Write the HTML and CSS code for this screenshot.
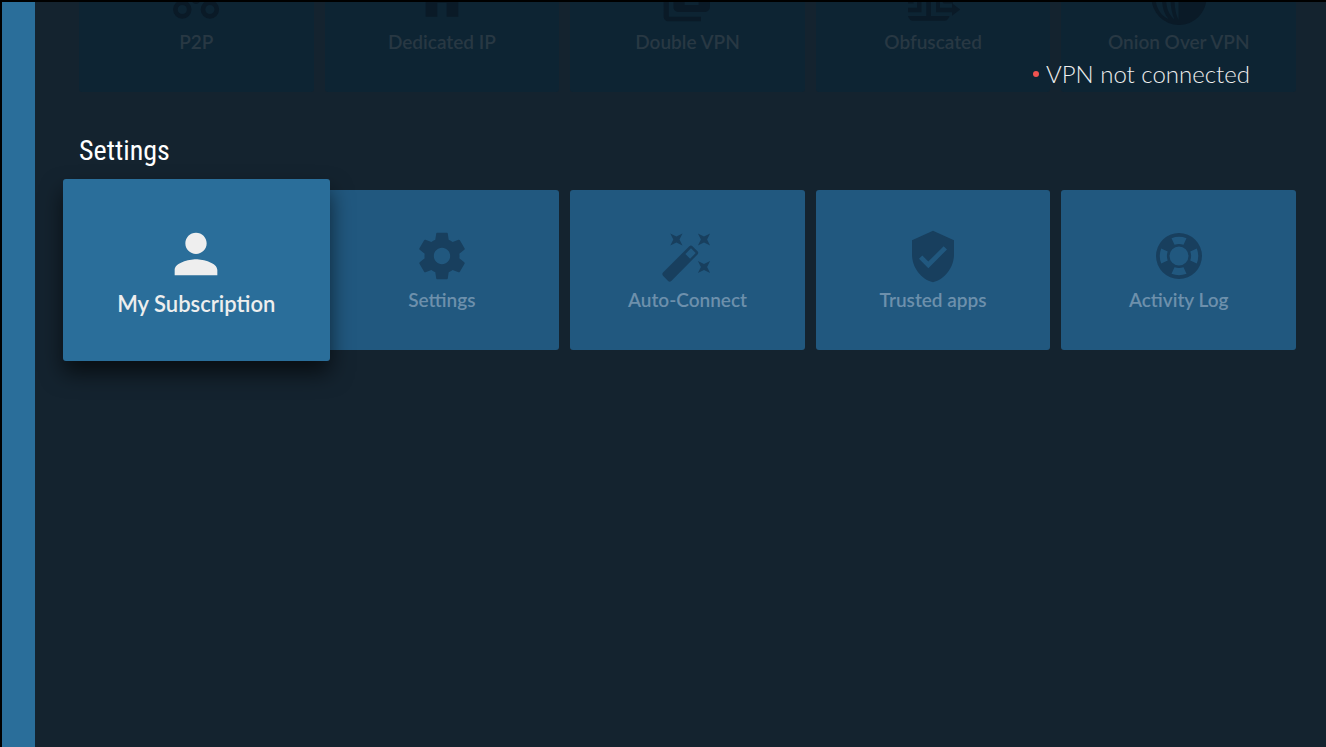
FILE: index.html
```html
<!DOCTYPE html>
<html lang="en">
<head>
<meta charset="utf-8">
<title>VPN Settings</title>
<link rel="stylesheet" href="styles.css">
</head>
<body>
<div class="app">
  <nav class="rail" aria-label="Menu"></nav>
  <main class="content">
    <section class="row row-dim" aria-label="Specialty servers">
      <button class="card" type="button">
        <svg class="icon" viewBox="0 0 56 56" fill="none" stroke="currentColor" stroke-width="4.6"><circle cx="14.3" cy="39.5" r="6.9"/><circle cx="41.9" cy="39.5" r="6.9"/><circle cx="28" cy="12" r="6.9"/><circle cx="28" cy="29.3" r="4.6" fill="currentColor" stroke="none"/></svg>
        <span class="label">P2P</span>
      </button>
      <button class="card" type="button">
        <svg class="icon" viewBox="0 0 24 24" fill="currentColor"><path d="M10 20v-6h4v6h5v-8h3L12 3 2 12h3v8z"/></svg>
        <span class="label">Dedicated IP</span>
      </button>
      <button class="card" type="button">
        <svg class="icon" viewBox="0 0 24 24" fill="currentColor" fill-rule="evenodd"><path d="M4.200 6H2v14c0 1.100.9 2 2 2h14v-2H4.200zM8.200 2h11.600c1.100 0 2 .9 2 2v12c0 1.100-.9 2-2 2H8.200c-1.100 0-2-.9-2-2V4c0-1.100.9-2 2-2zM11 9v6h6V9z"/></svg>
        <span class="label">Double VPN</span>
      </button>
      <button class="card" type="button">
        <svg class="icon" viewBox="0 0 56 56" fill="currentColor"><path d="M3 46h41.500c-1 3-2.500 4.700-5 4.700H8c-2.500 0-4-1.700-5-4.700zM21.300 10h4.700v37h-4.700zM3 37.700h9V20h4.500v22.300H3zM3 30h5.500v3.500H3zM31 20h4v17.700h12v-4.400l8.200 6.200-8.200 6.300v-3.500H31zM35 30h13v3.500H39z"/></svg>
        <span class="label">Obfuscated</span>
      </button>
      <button class="card" type="button">
        <svg class="icon" viewBox="0 0 56 56" fill="currentColor" fill-rule="evenodd"><path d="M28 0a27.500 27.500 0 0 1 0 55A27.500 27.500 0 0 1 28 0zM4.500 28c.5 10 5 17.500 13 21-5-6-6.500-13-6.500-21zM15 28c0 10 3 17 8.500 21.500-3-7-4-14-4-21.500zM23.500 28c0 9 1 16 4 22V28z"/></svg>
        <span class="label">Onion Over VPN</span>
      </button>
    </section>

    <h2 class="heading">Settings</h2>
    <section class="row" aria-label="Settings">
      <button class="card card-focused" type="button">
        <svg class="icon" viewBox="0 0 24 24" fill="currentColor"><path d="M12 12c2.210 0 4-1.790 4-4s-1.790-4-4-4-4 1.790-4 4 1.790 4 4 4zm0 2c-2.670 0-8 1.340-8 4v2h16v-2c0-2.660-5.330-4-8-4z"/></svg>
        <span class="label">My Subscription</span>
      </button>
      <button class="card" type="button">
        <svg class="icon" viewBox="0 0 24 24" fill="currentColor"><path d="M19.430 12.980c.04-.32.07-.64.07-.98s-.03-.66-.07-.98l2.110-1.650c.19-.15.24-.42.12-.64l-2-3.460c-.12-.22-.39-.3-.61-.22l-2.490 1c-.52-.4-1.080-.73-1.690-.98l-.38-2.650C14.460 2.180 14.250 2 14 2h-4c-.25 0-.46.18-.49.42l-.38 2.650c-.61.25-1.170.59-1.690.98l-2.490-1c-.23-.09-.49 0-.61.22l-2 3.460c-.13.22-.07.49.12.64l2.110 1.650c-.04.32-.07.65-.07.98s.03.66.07.98l-2.110 1.650c-.19.15-.24.42-.12.64l2 3.460c.12.22.39.3.61.22l2.490-1c.52.4 1.080.73 1.690.98l.38 2.650c.03.24.24.42.49.42h4c.25 0 .46-.18.49-.42l.38-2.650c.61-.25 1.170-.59 1.690-.98l2.490 1c.23.09.49 0 .61-.22l2-3.460c.12-.22.07-.49-.12-.64l-2.110-1.650zM12 15.500c-1.930 0-3.500-1.570-3.500-3.500s1.570-3.500 3.500-3.500 3.500 1.570 3.500 3.500-1.570 3.500-3.500 3.500z"/></svg>
        <span class="label">Settings</span>
      </button>
      <button class="card" type="button">
        <svg class="icon" viewBox="0 0 56 56" fill="currentColor" fill-rule="evenodd"><path d="M30.300 18.200q1.600-1.500 3.200 0l5 5q1.500 1.600 0 3.200L12.300 53q-1.600 1.300-3.200 0L4 47.700q-1.300-1.600 0-3.200zM32 20.300l-5.600 5.700 4.700 4.800 5.600-5.800zM11.300 5.500l6.100 3 6.100-3-3 6 3 6-6.100-3-6.100 3 3-6zM38.900 5.500l6.100 3 6.100-3-3 6 3 6-6.100-3-6.100 3 3-6zM38.900 33l6.100 3 6.100-3-3 6 3 6-6.100-3-6.100 3 3-6z"/></svg>
        <span class="label">Auto-Connect</span>
      </button>
      <button class="card" type="button">
        <svg class="icon" viewBox="0 0 24 24" fill="currentColor"><path d="M12 1.200L3 5.200v6c0 5.550 3.840 10.740 9 12 5.160-1.260 9-6.450 9-12v-6zM10 17.200l-4-4 1.410-1.410L10 14.370l6.590-6.590L18 9.200z"/></svg>
        <span class="label">Trusted apps</span>
      </button>
      <button class="card" type="button">
        <svg class="icon" viewBox="0 0 56 56" fill="currentColor" fill-rule="evenodd"><path d="M28 5a23 23 0 1 1 0 46 23 23 0 1 1 0-46zM28 18.500a9.500 9.500 0 1 0 0 19 9.500 9.500 0 1 0 0-19zM20.500 10.200l3 6.500q4.500-1.600 9 0l3-6.500q-7.500-2.900-15 0zM20.500 45.800l3-6.500q4.500 1.600 9 0l3 6.500q-7.500 2.900-15 0zM10.200 20.500l6.500 3q-1.600 4.500 0 9l-6.500 3q-2.900-7.500 0-15zM45.800 20.500l-6.500 3q1.600 4.500 0 9l6.500 3q2.900-7.500 0-15z"/></svg>
        <span class="label">Activity Log</span>
      </button>
    </section>
    <p class="status"><span class="dot"></span>VPN not connected</p>
  </main>
</div>
</body>
</html>
```
FILE: styles.css
```css
* {
  box-sizing: border-box;
}

body {
  margin: 0;
  background: #000;
  font-family: Lato, "Liberation Sans", sans-serif;
}

.app {
  display: flex;
  min-height: 100vh;
  padding: 2px 0 0 2px;
}

.rail {
  flex: 0 0 33px;
  background: #2a6e9a;
}

.content {
  position: relative;
  flex: 1;
  overflow: hidden;
  padding: 0 30px 0 44px;
  background: #14232f;
}

.row {
  display: grid;
  grid-template-columns: repeat(5, 1fr);
  grid-auto-rows: 160px;
  gap: 11px;
}

/* The servers row is scrolled partly above the top edge. */
.row-dim {
  margin-top: -70px;
}

.card {
  display: flex;
  flex-direction: column;
  align-items: center;
  justify-content: center;
  gap: 4px;
  padding: 0;
  border: 0;
  border-radius: 3px;
  background: #21587f;
  color: #183f5e;
  font-family: inherit;
}

.icon {
  display: block;
  width: 56px;
  height: 56px;
}

.label {
  color: #6d90ac;
  font-size: 19px;
  font-weight: 600;
  line-height: 24px;
  white-space: nowrap;
}

.row-dim .card {
  background: #0d2433;
  color: #0a1a27;
}

.row-dim .label {
  color: #283843;
}

.card-focused {
  z-index: 1;
  margin: -11px -16px;
  background: #2a6e9a;
  color: #eee;
  box-shadow: 0 12px 22px rgba(0, 0, 0, 0.6);
}

.card-focused .icon {
  width: 64px;
  height: 64px;
}

.card-focused .label {
  color: #eee;
  font-size: 22px;
  line-height: 28px;
}

.heading {
  margin: 42px 0 22px;
  color: #fff;
  font-family: "Roboto Condensed", Roboto, sans-serif;
  font-size: 28px;
  font-weight: 400;
  line-height: 34px;
}

.status {
  position: absolute;
  top: 56px;
  right: 76px;
  display: flex;
  align-items: center;
  gap: 7px;
  margin: 0;
  color: #eee;
  font-size: 24px;
  font-weight: 300;
  line-height: 32px;
}

.dot {
  width: 6px;
  height: 6px;
  border-radius: 50%;
  background: #ef5350;
}
```
